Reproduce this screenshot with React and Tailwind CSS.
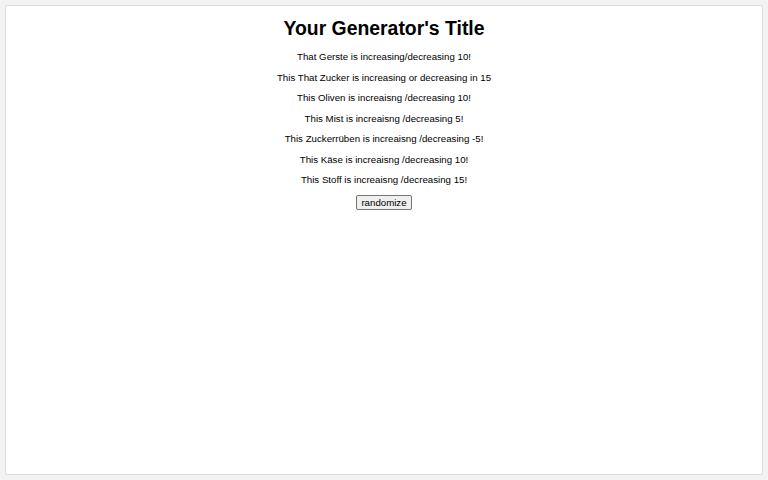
export default function App() {
  const lines = [
    "That Gerste is increasing/decreasing 10!",
    "This That Zucker is increasing or decreasing in 15",
    "This Oliven is increaisng /decreasing 10!",
    "This Mist is increaisng /decreasing 5!",
    "This Zuckerrüben is increaisng /decreasing -5!",
    "This Käse is increaisng /decreasing 10!",
    "This Stoff is increaisng /decreasing 15!",
  ];
  return (
    <div className="h-[480px] w-[768px] bg-[#f3f3f3] p-[5px] font-['Liberation_Sans',Arial,sans-serif] text-black">
      <div className="h-full border border-[#dddddd] bg-white text-center">
        <h1 className="mt-[10px] text-[19.4px] font-bold leading-[24px]">Your Generator's Title</h1>
        <div className="mt-[11px] flex flex-col gap-[8.5px]">
          {lines.map((l) => (
            <p key={l} className="text-[9.7px] leading-[12px]">{l}</p>
          ))}
        </div>
        <button className="mt-[8.5px] rounded-[2px] border border-[#767676] bg-[#efefef] px-[4px] text-[9.7px] leading-[13px]">
          randomize
        </button>
      </div>
    </div>
  );
}
